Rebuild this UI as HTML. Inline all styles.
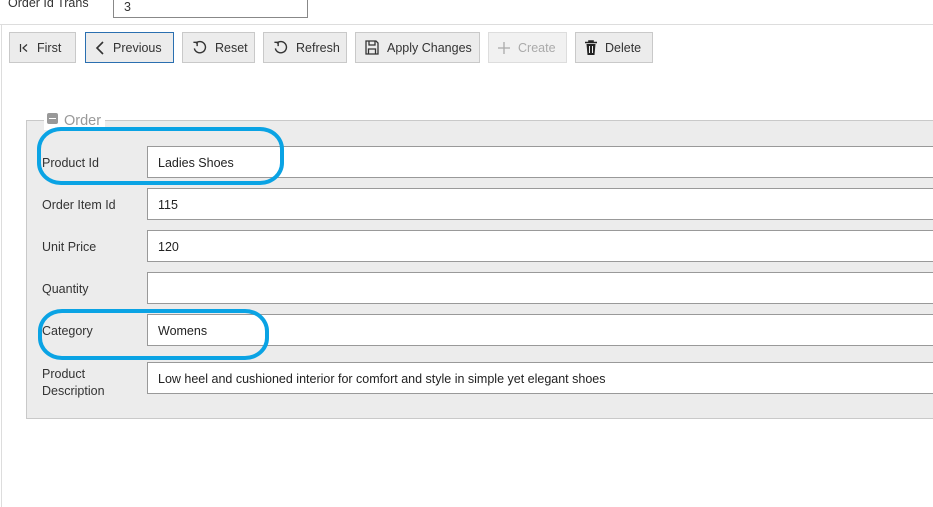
<!DOCTYPE html>
<html><head><style>
*{box-sizing:border-box;margin:0;padding:0}
body{width:933px;height:507px;background:#fff;font-family:"Segoe UI","Liberation Sans",sans-serif;font-size:12.5px;color:#333;position:relative;overflow:hidden}
.a{position:absolute}
.btn{position:absolute;top:32px;height:31px;background:#ececec;border:1px solid #c9c9c9;display:flex;align-items:center;padding-left:9px;color:#333;font-size:12.5px}
.btn svg{margin-right:8px}
.lbl{position:absolute;left:42px;font-size:12.5px;color:#333}
.inp{position:absolute;left:147px;width:800px;height:32px;background:#fff;border:1px solid #999;padding-left:10px;line-height:32px;font-size:12.5px;color:#222}
.ring{position:absolute;border:4px solid #0aa3e4;border-radius:24px/22px}
</style></head><body>
<div class="a" style="left:8px;top:-4px;font-size:12.5px">Order Id Trans</div>
<div class="a" style="left:113px;top:-4px;width:195px;height:22px;border:1px solid #888;padding-left:10px;line-height:20px">3</div>
<div class="a" style="left:0;top:24px;width:933px;height:1px;background:#ddd"></div>
<div class="a" style="left:1px;top:25px;width:1px;height:482px;background:#ddd"></div>

<div class="btn" style="left:9px;width:67px"><svg width="10" height="10" viewBox="0 0 10 10"><path d="M1.5 1v8M8 1.5L4 5l4 3.5" stroke="#333" fill="none" stroke-width="1.2"/></svg>First</div>
<div class="btn" style="left:85px;width:89px;border-color:#2a6fb0"><svg width="10" height="14" viewBox="0 0 10 14"><path d="M8 1L2 7l6 6" stroke="#333" fill="none" stroke-width="1.6"/></svg>Previous</div>
<div class="btn" style="left:182px;width:73px"><svg width="15" height="15" viewBox="0 0 16 16"><path d="M4 3.5A6 6 0 1 1 2.5 9" stroke="#333" fill="none" stroke-width="1.5"/><path d="M1.5 2.5h4v4" stroke="#333" fill="none" stroke-width="1.5"/></svg>Reset</div>
<div class="btn" style="left:263px;width:84px"><svg width="15" height="15" viewBox="0 0 16 16"><path d="M4 3.5A6 6 0 1 1 2.5 9" stroke="#333" fill="none" stroke-width="1.5"/><path d="M1.5 2.5h4v4" stroke="#333" fill="none" stroke-width="1.5"/></svg>Refresh</div>
<div class="btn" style="left:355px;width:125px"><svg width="14" height="15" viewBox="0 0 14 15"><path d="M1 1h10l2 2v11H1zM4 1v4h6V1M3.5 14V9h7v5" stroke="#333" fill="none" stroke-width="1.3"/></svg>Apply Changes</div>
<div class="btn" style="left:488px;width:79px;background:#f1f1f1;border-color:#ddd;color:#aaa"><svg width="12" height="12" viewBox="0 0 12 12"><path d="M6 0v12M0 6h12" stroke="#aaa" stroke-width="1.3"/></svg>Create</div>
<div class="btn" style="left:575px;width:78px"><svg width="12" height="15" viewBox="0 0 12 15"><path d="M0 2.5h12M4 2.5V1h4v1.5" stroke="#222" stroke-width="1.6" fill="none"/><path d="M1.5 4h9l-1 11h-7z" fill="#222"/><path d="M4.5 6v7M7.5 6v7" stroke="#ececec" stroke-width="1"/></svg>Delete</div>

<div class="a" style="left:26px;top:120px;width:920px;height:299px;background:#ececec;border:1px solid #c9c9c9"></div>
<div class="a" style="left:44px;top:112px;background:#fff;padding:0 4px 0 3px;height:18px;display:flex;align-items:center;color:#999;font-size:14.5px"><span style="display:inline-block;width:11px;height:11px;background:#999;border-radius:2px;position:relative;margin-right:6px;top:-3px"><span style="position:absolute;left:2px;top:5px;width:7px;height:1.5px;background:#fff"></span></span>Order</div>

<div class="lbl" style="top:156px">Product Id</div><div class="inp" style="top:146px">Ladies Shoes</div>
<div class="lbl" style="top:198px">Order Item Id</div><div class="inp" style="top:188px">115</div>
<div class="lbl" style="top:240px">Unit Price</div><div class="inp" style="top:230px">120</div>
<div class="lbl" style="top:282px">Quantity</div><div class="inp" style="top:272px"></div>
<div class="lbl" style="top:324px">Category</div><div class="inp" style="top:314px">Womens</div>
<div class="lbl" style="top:366px;line-height:17px">Product<br>Description</div><div class="inp" style="top:362px">Low heel and cushioned interior for comfort and style in simple yet elegant shoes</div>

<div class="ring" style="left:37px;top:127px;width:247px;height:58px"></div>
<div class="ring" style="left:38px;top:309px;width:231px;height:51px"></div>
</body></html>
